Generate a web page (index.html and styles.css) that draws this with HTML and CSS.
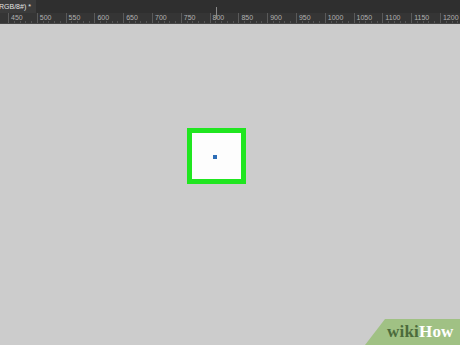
FILE: index.html
```html
<!DOCTYPE html>
<html>
<head>
<meta charset="utf-8">
<link rel="stylesheet" href="styles.css">
</head>
<body>
<div class="app">
  <div class="tabbar">
    <div class="tab">RGB/8#) *</div>
  </div>
  <div class="ruler">
    <span class="mark">450</span><span class="mark">500</span><span class="mark">550</span><span class="mark">600</span><span class="mark">650</span><span class="mark">700</span><span class="mark">750</span><span class="mark">800</span><span class="mark">850</span><span class="mark">900</span><span class="mark">950</span><span class="mark">1000</span><span class="mark">1050</span><span class="mark">1100</span><span class="mark">1150</span><span class="mark">1200</span>
    <span class="cursor"></span>
  </div>
  <div class="canvas">
    <div class="selection">
      <div class="dot"></div>
    </div>
    <div class="badge"><span class="wiki">wiki</span><span class="how">How</span></div>
  </div>
</div>
</body>
</html>
```
FILE: styles.css
```css
html, body {
  margin: 0;
  padding: 0;
  width: 460px;
  height: 345px;
  overflow: hidden;
  background: #cbcbcb;
  font-family: "Liberation Sans", Arial, sans-serif;
}
.app {
  width: 460px;
  height: 345px;
  display: flex;
  flex-direction: column;
}
.tabbar {
  height: 13px;
  background: #2f2f2f;
  display: flex;
}
.tab {
  width: 36px;
  background: #3b3b3b;
  color: #e4e4e4;
  font-size: 7px;
  line-height: 13px;
  text-indent: -1px;
  white-space: nowrap;
  overflow: hidden;
}
.ruler {
  position: relative;
  height: 10px;
  background-color: #353535;
  background-image: repeating-linear-gradient(90deg, #555 0 1px, transparent 1px 5.76px);
  background-size: 100% 2px;
  background-repeat: no-repeat;
  background-position: 8px 100%;
  display: flex;
  padding-left: 8px;
  border-bottom: 1px solid #454545;
}
.mark {
  flex: 0 0 28.8px;
  box-sizing: border-box;
  border-left: 1px solid #5a5a5a;
  color: #b0b0b0;
  font-size: 7px;
  line-height: 10px;
  padding-left: 2px;
  white-space: nowrap;
}
.cursor {
  position: absolute;
  left: 216px;
  top: -6px;
  width: 1px;
  height: 12px;
  background: #8a8a8a;
}
.canvas {
  flex: 1;
  position: relative;
  background: #cccccc;
  display: flex;
  justify-content: center;
}
.selection {
  margin-top: 104px;
  margin-left: -27px;
  width: 49px;
  height: 46px;
  border: 5px solid #20e620;
  background: #fdfdfd;
  display: flex;
  align-items: center;
  justify-content: center;
}
.dot {
  width: 4px;
  height: 4px;
  background: #2d6db6;
  margin-left: -4px;
  margin-top: 2px;
}
.badge {
  position: absolute;
  right: 0;
  bottom: 0;
  width: 95px;
  height: 26px;
  background: #a0c184;
  clip-path: polygon(20px 0, 100% 0, 100% 100%, 0 100%);
  box-sizing: border-box;
  padding-left: 22px;
  padding-top: 3px;
  font-family: "Liberation Serif", "Times New Roman", serif;
  font-weight: bold;
  font-size: 17px;
  line-height: 20px;
  letter-spacing: 0.2px;
}
.wiki { color: #4c6b3c; }
.how { color: #ffffff; }
```
